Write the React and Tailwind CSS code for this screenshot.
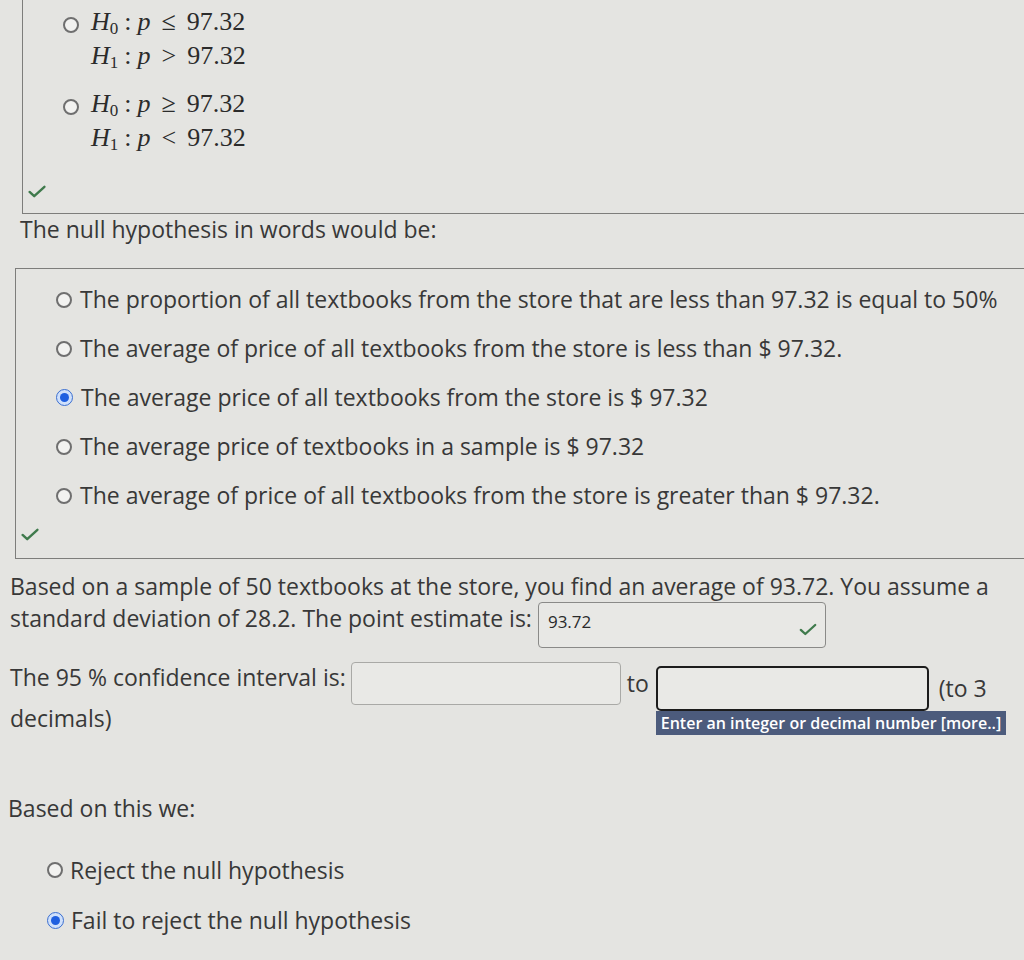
import React from "react";

const sans = { fontFamily: '"Open Sans", "Noto Sans", sans-serif' };
const serif = { fontFamily: '"Liberation Serif", "DejaVu Serif", serif' };

function Radio({ checked }) {
  if (checked) {
    return (
      <span className="inline-flex h-[17px] w-[17px] shrink-0 items-center justify-center rounded-full border-[1.5px] border-[#3b6fd0] bg-[#cfe0fb]">
        <span className="h-[9px] w-[9px] rounded-full bg-[#1f5fe0]" />
      </span>
    );
  }
  return (
    <span className="inline-block h-[16px] w-[16px] shrink-0 rounded-full border-2 border-[#6f6f6f] bg-[#f2f2f0]" />
  );
}

function Check({ className }) {
  return (
    <svg viewBox="0 0 20 14" className={className} fill="none">
      <path d="M2 7.5 L7 12 L18 2" stroke="#3f7a4c" strokeWidth="2.6" strokeLinecap="round" strokeLinejoin="round" />
    </svg>
  );
}

function Hyp({ rel0, rel1 }) {
  return (
    <div className="text-[26px] leading-[34px] text-[#2b2b2b]" style={serif}>
      <div>
        <i>H</i>
        <sub className="text-[17px]">0</sub>
        <span className="mx-[6px]">:</span>
        <i>p</i>
        <span className="mx-[11px]">{rel0}</span>
        97.32
      </div>
      <div>
        <i>H</i>
        <sub className="text-[17px]">1</sub>
        <span className="mx-[6px]">:</span>
        <i>p</i>
        <span className="mx-[11px]">{rel1}</span>
        97.32
      </div>
    </div>
  );
}

const words = [
  { t: "The proportion of all textbooks from the store that are less than 97.32 is equal to 50%", c: false },
  { t: "The average of price of all textbooks from the store is less than $ 97.32.", c: false },
  { t: "The average price of all textbooks from the store is $ 97.32", c: true },
  { t: "The average price of textbooks in a sample is $ 97.32", c: false },
  { t: "The average of price of all textbooks from the store is greater than $ 97.32.", c: false },
];

export default function App() {
  return (
    <div className="min-h-[960px] w-[1024px] overflow-hidden bg-[#e4e4e1] text-[#383838]" style={sans}>
      {/* hypotheses box */}
      <div className="ml-[22px] border-b-[1.5px] border-l-[1.5px] border-[#7d7d7b] pb-[15px] pl-[40px] pt-[5px]">
        <div className="flex items-start gap-[12px]">
          <span className="mt-[10px]"><Radio /></span>
          <Hyp rel0="≤" rel1=">" />
        </div>
        <div className="mt-[14px] flex items-start gap-[12px]">
          <span className="mt-[10px]"><Radio /></span>
          <Hyp rel0="≥" rel1="<" />
        </div>
        <Check className="-ml-[36px] mt-[30px] h-[13px] w-[20px]" />
      </div>

      <div className="pl-[20px] text-[23px] leading-[30px]">The null hypothesis in words would be:</div>

      {/* words box */}
      <div className="ml-[15px] mt-[24px] border-b-[1.5px] border-l-[1.5px] border-t-[1.5px] border-[#7d7d7b] pb-[17px] pl-[40px] pt-[6px]">
        <div className="flex flex-col">
          {words.map((w, i) => (
            <div key={i} className="flex h-[49px] items-center gap-[8px] text-[23px]">
              <Radio checked={w.c} />
              <span>{w.t}</span>
            </div>
          ))}
        </div>
        <Check className="-ml-[36px] mt-[8px] h-[13px] w-[20px]" />
      </div>

      {/* point estimate */}
      <div className="pl-[10px] pt-[12px] text-[23px] leading-[31px]">
        <div>Based on a sample of 50 textbooks at the store, you find an average of 93.72. You assume a</div>
        <div className="flex items-start">
          <span className="mt-[1px]">standard deviation of 28.2. The point estimate is:</span>
          <div className="ml-[6px] flex h-[46px] w-[288px] items-start justify-between rounded-[4px] border-[1.5px] border-[#8a8a88] bg-[#e8e8e5] pl-[9px] pr-[8px]">
            <span className="mt-[3px] text-[17px] text-[#2a2a2a]">93.72</span>
            <Check className="mt-[20px] h-[13px] w-[18px]" />
          </div>
        </div>
      </div>

      {/* confidence interval */}
      <div className="mt-[14px] pl-[10px] text-[23px]">
        <div className="flex items-start">
          <span className="leading-[30px]">The 95 % confidence interval is:</span>
          <div className="ml-[5px] h-[43px] w-[270px] rounded-[4px] border-[1.5px] border-[#a9a9a6] bg-[#e9e9e6]" />
          <span className="ml-[6px] mt-[6px] leading-[30px]">to</span>
          <div className="relative ml-[7px] mt-[4px]">
            <div className="h-[45px] w-[273px] rounded-[5px] border-2 border-[#1c1c1c] bg-[#e9e9e6]" />
            <div className="absolute left-0 top-[45px] whitespace-nowrap bg-[#4c5b7c] px-[5px] py-[1px] text-[16px] font-semibold leading-[22px] text-white">
              Enter an integer or decimal number [more..]
            </div>
          </div>
          <span className="ml-[10px] mt-[11px] leading-[30px]">(to 3</span>
        </div>
        <div className="mt-[-8px] leading-[30px]">decimals)</div>
      </div>

      {/* conclusion */}
      <div className="mt-[60px] pl-[8px] text-[23px] leading-[30px]">Based on this we:</div>
      <div className="mt-[22px] flex flex-col pl-[47px] text-[23px]">
        <div className="flex h-[50px] items-center gap-[7px]">
          <Radio />
          <span>Reject the null hypothesis</span>
        </div>
        <div className="flex h-[50px] items-center gap-[7px]">
          <Radio checked />
          <span>Fail to reject the null hypothesis</span>
        </div>
      </div>
    </div>
  );
}
